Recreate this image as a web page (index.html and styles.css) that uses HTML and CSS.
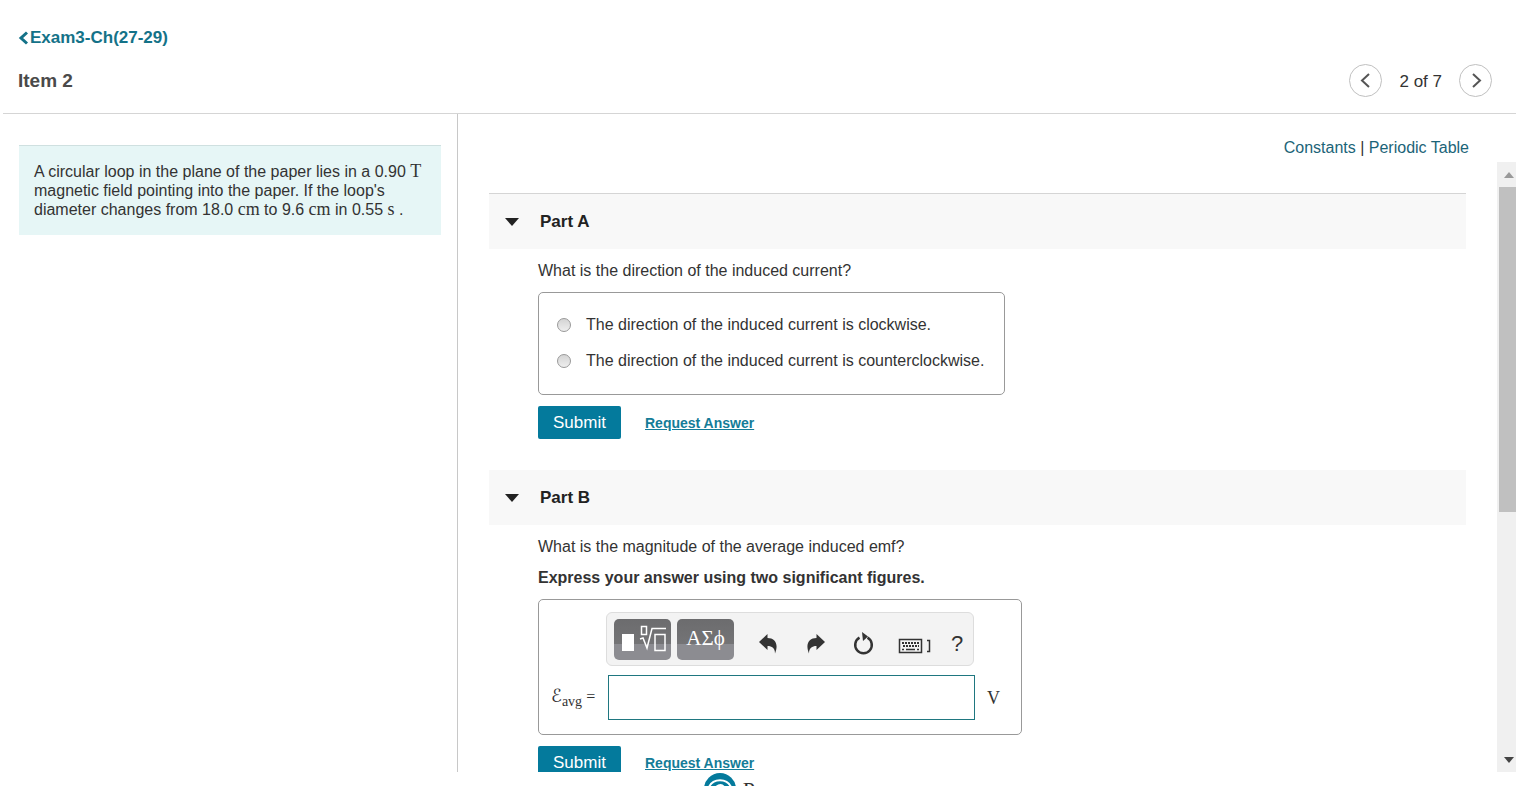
FILE: index.html
```html
<!DOCTYPE html>
<html lang="en">
<head>
	<meta charset="UTF-8" />
	<meta name="viewport" content="width=device-width, initial-scale=1.0" />
	<title>Exam3-Ch(27-29)</title>
	<link rel="stylesheet" href="styles.css">
</head>
<body>
	<header class="page-header">
		<a class="back-link" href="#">
			<svg class="back-icon" viewBox="0 0 12 14" aria-hidden="true">
				<path d="M9 1.5L3 7l6 5.5" />
			</svg>Exam3-Ch(27-29)
		</a>
		<div class="title-row">
			<h1>Item 2</h1>
			<nav class="pager">
				<button class="pager-button" aria-label="Previous item">
					<svg viewBox="0 0 16 16"><path d="M11 1L4 7.500l7 6.500" /></svg>
				</button>
				<span class="pager-count">2 of 7</span>
				<button class="pager-button" aria-label="Next item">
					<svg viewBox="0 0 16 16"><path d="M5 1l7 6.500L5 14" /></svg>
				</button>
			</nav>
		</div>
	</header>

	<main class="columns">
		<aside class="intro">
			<p class="problem">A circular loop in the plane of the paper lies in a 0.90 <span class="unit">T</span> magnetic field pointing into the paper. If the loop's diameter changes from 18.0 <span class="unit">cm</span> to 9.6 <span class="unit">cm</span> in 0.55 <span class="unit">s</span> .</p>
		</aside>

		<div class="work">
			<div class="resources"><a href="#">Constants</a> | <a href="#">Periodic Table</a></div>

			<div class="scroll-area">
				<div class="parts">
					<section class="part">
						<h2 class="part-head part-head-first"><svg class="caret" viewBox="0 0 14 8"><path d="M0 0h14L7 8z" /></svg>Part A</h2>
						<div class="part-body">
							<p class="question">What is the direction of the induced current?</p>
							<div class="choices">
								<label><input type="radio" name="direction" />The direction of the induced current is clockwise.</label>
								<label><input type="radio" name="direction" />The direction of the induced current is counterclockwise.</label>
							</div>
							<div class="actions">
								<button class="submit">Submit</button>
								<a class="request" href="#">Request Answer</a>
							</div>
						</div>
					</section>

					<section class="part">
						<h2 class="part-head"><svg class="caret" viewBox="0 0 14 8"><path d="M0 0h14L7 8z" /></svg>Part B</h2>
						<div class="part-body">
							<p class="question">What is the magnitude of the average induced emf?</p>
							<p class="instruction">Express your answer using two significant figures.</p>
							<div class="answer">
								<div class="toolbar">
									<button class="palette" aria-label="Templates">
										<svg viewBox="0 0 57 41">
											<path class="solid" d="M8 15h12v17H8z" />
											<path class="line" d="M27.5 7.500h5v8h-5z" />
											<path class="line" d="M26 20l3-1 4 10 5-19.500h14" />
											<path class="line" d="M41 15.500h10v16H41z" />
										</svg>
									</button>
									<button class="palette greek">ΑΣϕ</button>
									<div class="tools">
										<button class="tool" aria-label="Undo">
											<svg viewBox="0 0 20 20"><path d="M1 8L9.500 0v4C17 4 21 10 17 19.500C17 14 14 12 9.500 12v4z" /></svg>
										</button>
										<button class="tool" aria-label="Redo">
											<svg viewBox="0 0 20 20"><path d="M19 8L10.500 0v4C3 4-1 10 3 19.500C3 14 6 12 10.500 12v4z" /></svg>
										</button>
										<button class="tool reset" aria-label="Reset">
											<svg viewBox="0 0 24 24"><path class="ring" d="M15.500 5.700A8.300 8.300 0 1 1 7.500 5.700" /><path d="M10 0l6 4.500-5 4.500z" /></svg>
										</button>
										<button class="tool keyboard" aria-label="Keyboard shortcuts">
											<svg viewBox="0 0 34 16">
												<path class="frame" d="M1.500 1.500h22v13h-22z" />
												<path class="keys" d="M4 5h18M5 8h16" />
												<path class="frame" d="M4 11.500h2M8 11.500h9M19 11.500h2M29 2.500h2.500v11H29" />
											</svg>
										</button>
										<button class="tool help" aria-label="Help">?</button>
									</div>
								</div>
								<div class="entry">
									<label for="emf"><span class="emf">ℰ</span><sub>avg</sub> =</label>
									<input id="emf" type="text" />
									<span class="volts">V</span>
								</div>
							</div>
							<div class="actions">
								<button class="submit">Submit</button>
								<a class="request" href="#">Request Answer</a>
							</div>
						</div>
					</section>
				</div>

				<div class="scrollbar" aria-hidden="true">
					<svg class="arrow-up" viewBox="0 0 10 6"><path d="M0 6h10L5 0z" /></svg>
					<div class="thumb"></div>
					<svg class="arrow-down" viewBox="0 0 10 6"><path d="M0 0h10L5 6z" /></svg>
				</div>
			</div>
		</div>
	</main>

	<footer class="page-footer">
		<svg class="logo" viewBox="0 0 32 32" aria-hidden="true">
			<circle class="disc" cx="16" cy="16" r="16" />
			<path class="mark" d="M5 14C9 5 23 5 27 14M12 14q5-4 8 0t-5 8" />
		</svg>
		<span>Pearson</span>
	</footer>
</body>
</html>
```
FILE: styles.css
```css
:root {
	--teal: #047a9c;
	--link: #1b6478;
	--text: #333;
	--rule: #d5d5d5;
	--math: "Liberation Serif", "Times New Roman", serif;
}

* {
	box-sizing: border-box;
}

body {
	display: flex;
	flex-direction: column;
	height: 100vh;
	margin: 0;
	overflow: hidden;
	background: #fff;
	color: var(--text);
	font: 16px/20px "Liberation Sans", Arial, sans-serif;
}

h1,
h2,
p {
	margin: 0;
}

button {
	padding: 0;
	border: 0;
	background: none;
	color: inherit;
	font: inherit;
	cursor: pointer;
}

svg {
	display: block;
	flex: none;
}

/* header */
.page-header {
	margin-left: 3px;
	padding: 28px 24px 16px 15px;
	border-bottom: 1px solid var(--rule);
}

.back-link {
	display: flex;
	align-items: center;
	width: max-content;
	color: #147288;
	font-size: 17px;
	font-weight: bold;
	text-decoration: none;
}

.back-icon {
	width: 12px;
	height: 14px;
	fill: none;
	stroke: currentColor;
	stroke-width: 3;
}

.title-row {
	display: flex;
	align-items: center;
	justify-content: space-between;
	margin-top: 16px;
}

h1 {
	color: #4a4a4a;
	font-size: 19px;
}

.pager {
	display: flex;
	align-items: center;
	gap: 17px;
	font-size: 17px;
}

.pager-count {
	padding-top: 3px;
}

.pager-button {
	display: grid;
	place-items: center;
	width: 33px;
	height: 33px;
	border: 1px solid #c0c0c0;
	border-radius: 50%;
}

.pager-button svg {
	width: 16px;
	height: 16px;
	fill: none;
	stroke: #555;
	stroke-width: 2;
}

/* columns */
.columns {
	display: flex;
	flex: 1;
	min-height: 0;
}

.intro {
	flex: none;
	width: 458px;
	padding: 31px 16px 0 19px;
	border-right: 1px solid #c8c8c8;
}

.problem {
	padding: 16px 15px;
	border-top: 1px solid #cfe0e0;
	background: #e6f6f6;
	line-height: 19px;
}

.unit,
.volts {
	font-family: var(--math);
	font-size: 18px;
	line-height: 1;
}

.work {
	display: flex;
	flex: 1;
	flex-direction: column;
	min-width: 0;
}

.resources {
	padding: 24px 47px 4px;
	text-align: right;
}

.resources a {
	color: var(--link);
	text-decoration: none;
}

.scroll-area {
	display: flex;
	flex: 1;
	min-height: 0;
}

.parts {
	flex: 1;
	padding: 31px 31px 0;
	overflow: hidden;
}

/* parts */
.part {
	margin-bottom: 31px;
}

.part-head {
	display: flex;
	align-items: center;
	gap: 21px;
	height: 55px;
	padding-left: 16px;
	background: #f8f8f8;
	color: #222;
	font-size: 17px;
}

.part-head-first {
	height: 56px;
	border-top: 1px solid var(--rule);
}

.caret {
	width: 14px;
	height: 8px;
	fill: currentColor;
}

.part-body {
	padding: 12px 0 0 49px;
}

.question,
.instruction {
	margin-bottom: 11px;
}

.instruction {
	font-weight: bold;
}

.choices {
	display: flex;
	flex-direction: column;
	gap: 16px;
	width: 467px;
	padding: 22px 18px 23px;
	border: 1px solid #999;
	border-radius: 5px;
}

.choices label {
	display: flex;
	align-items: center;
	gap: 15px;
}

.choices input {
	width: 14px;
	height: 14px;
	margin: 0;
	border: 1px solid #999;
	border-radius: 50%;
	background: linear-gradient(#d4d4d4, #eee);
	appearance: none;
}

.actions {
	display: flex;
	align-items: center;
	gap: 24px;
	margin-top: 11px;
}

.submit {
	width: 83px;
	height: 33px;
	border-radius: 2px;
	background: var(--teal);
	color: #fff;
	font-size: 17px;
}

.request {
	color: #147c98;
	font-size: 14px;
	font-weight: bold;
}

/* answer editor */
.answer {
	width: 484px;
	padding: 12px 12px 14px;
	border: 1px solid #999;
	border-radius: 5px;
}

.toolbar {
	display: flex;
	align-items: center;
	gap: 6px;
	width: 368px;
	height: 54px;
	margin-left: 55px;
	padding-left: 7px;
	border: 1px solid #ddd;
	border-radius: 6px;
	background: #f3f3f3;
}

.palette {
	flex: none;
	width: 57px;
	height: 41px;
	border-radius: 5px;
	background: linear-gradient(#6c6c6e, #747476 62%, #8c8c91 62%, #8c8c91);
	color: #fff;
}

.palette .solid {
	fill: #fff;
}

.palette .line {
	fill: none;
	stroke: #fff;
	stroke-width: 1.5;
}

.greek {
	padding-bottom: 3px;
	font: 21px/38px var(--math);
}

.tools {
	display: flex;
	margin-left: 4px;
}

.tool {
	display: grid;
	place-items: center;
	width: 48px;
	height: 41px;
	padding-top: 10px;
	color: #333;
}

.tool svg {
	width: 20px;
	height: 20px;
	fill: currentColor;
}

.tool .ring,
.tool .frame,
.tool .keys {
	fill: none;
	stroke: currentColor;
	stroke-width: 2;
}

.tool .ring {
	stroke-width: 2.5;
}

.tool .frame {
	stroke-width: 1.5;
}

.tool .keys {
	stroke-dasharray: 2 1;
}

.reset svg {
	width: 24px;
	height: 24px;
}

.keyboard {
	width: 54px;
	padding-top: 14px;
}

.keyboard svg {
	width: 34px;
	height: 16px;
}

.help {
	width: 30px;
	font-size: 22px;
}

.entry {
	display: flex;
	align-items: center;
	margin-top: 9px;
}

.entry label {
	width: 57px;
	font-family: var(--math);
	white-space: nowrap;
}

.emf {
	font-family: "DejaVu Sans", sans-serif;
	font-size: 18px;
}

.entry sub {
	font-size: 14px;
	line-height: 1;
}

.entry input {
	width: 367px;
	height: 45px;
	padding: 0 8px;
	border: 1px solid #1f7780;
	font: inherit;
}

.volts {
	margin-left: 12px;
}

/* scrollbar */
.scrollbar {
	display: flex;
	flex: none;
	flex-direction: column;
	align-items: flex-end;
	width: 19px;
	background: #f0f0f0;
}

.arrow-up,
.arrow-down {
	width: 10px;
	height: 6px;
	margin: 10px 2px 9px;
	fill: #999;
}

.arrow-down {
	margin: auto 2px 9px;
	fill: #444;
}

.thumb {
	width: 17px;
	height: 53.3%;
	background: #c0c0c0;
}

/* footer */
.page-footer {
	display: flex;
	flex: none;
	align-items: flex-start;
	justify-content: center;
	gap: 7px;
	height: 14px;
	padding-top: 1px;
	overflow: hidden;
	font: 22px/34px var(--math);
}

.logo {
	width: 32px;
	height: 32px;
}

.disc {
	fill: var(--teal);
}

.mark {
	fill: none;
	stroke: #fff;
	stroke-width: 2;
}
```
